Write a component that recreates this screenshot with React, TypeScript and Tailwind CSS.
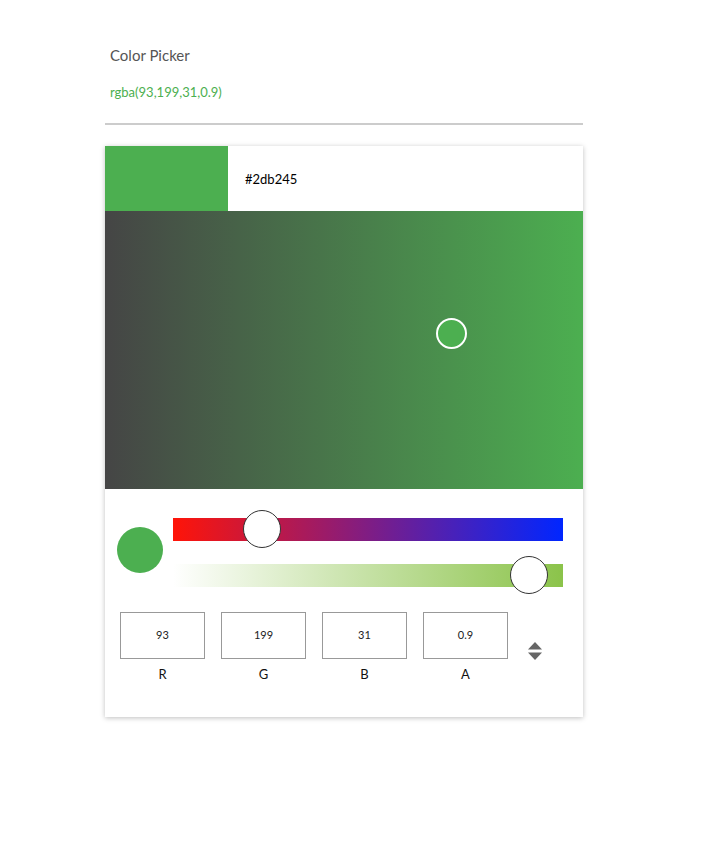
import React from 'react';

const channels = [
  { label: 'R', value: '93' },
  { label: 'G', value: '199' },
  { label: 'B', value: '31' },
  { label: 'A', value: '0.9' },
];

export default function App() {
  return (
    <div className="min-h-screen bg-white pl-[105px] pt-[45px]" style={{ fontFamily: '"Source Sans Pro", Lato, "Noto Sans", sans-serif' }}>
      <div className="w-[478px]">
        <h1 className="pl-[5px] text-[15px] leading-5 text-[#555]">Color Picker</h1>
        <p className="mt-[19px] pl-[5px] text-[13px] leading-4 text-[#4caf50]">rgba(93,199,31,0.9)</p>
        <div className="mt-[23px] h-[2px] bg-[#ccc]" />

        <div className="mt-[21px] bg-white shadow-[0_1px_5px_rgba(0,0,0,0.25)]">
          {/* header: swatch + hex */}
          <div className="flex h-[65px] items-center">
            <div className="h-full w-[123px] bg-[#4caf50]" />
            <span className="pl-[17px] pt-[3px] text-[13px] text-black">#2db245</span>
          </div>

          {/* saturation area */}
          <div className="relative h-[278px] bg-[linear-gradient(to_right,#454545,#4caf50)]">
            <div className="absolute left-[331px] top-[107px] h-[31px] w-[31px] rounded-full border-2 border-white bg-[#4caf50]" />
          </div>

          {/* sliders */}
          <div className="flex items-start pl-[12px] pr-[20px] pt-[29px]">
            <div className="mt-[9px] h-[46px] w-[46px] shrink-0 rounded-full bg-[#4caf50]" />
            <div className="ml-[10px] flex flex-1 flex-col gap-[23px]">
              <div className="relative h-[23px] bg-[linear-gradient(to_right,#ff1408,#0026ff)]">
                <div className="absolute left-[70px] top-[-8px] h-[38px] w-[38px] rounded-full border border-[#333] bg-white" />
              </div>
              <div className="relative h-[23px] bg-[linear-gradient(to_right,rgba(139,195,74,0),#8bc34a)]">
                <div className="absolute left-[337px] top-[-8px] h-[38px] w-[38px] rounded-full border border-[#333] bg-white" />
              </div>
            </div>
          </div>

          {/* inputs */}
          <div className="flex items-start pb-[35px] pl-[15px] pt-[25px]">
            <div className="flex gap-[16px]">
              {channels.map((c) => (
                <div key={c.label} className="flex w-[85px] flex-col items-center">
                  <div className="flex h-[47px] w-full items-center justify-center border border-[#999] text-[11px] text-[#222]">
                    {c.value}
                  </div>
                  <span className="mt-[7px] text-[13px] leading-4 text-[#111]">{c.label}</span>
                </div>
              ))}
            </div>
            <svg className="ml-[19px] mt-[29px]" width="16" height="20" viewBox="0 0 16 20">
              <path d="M8 1 L15 8.5 L1 8.5 Z" fill="#666" />
              <path d="M1 11.5 L15 11.5 L8 19 Z" fill="#666" />
            </svg>
          </div>
        </div>
      </div>
    </div>
  );
}
